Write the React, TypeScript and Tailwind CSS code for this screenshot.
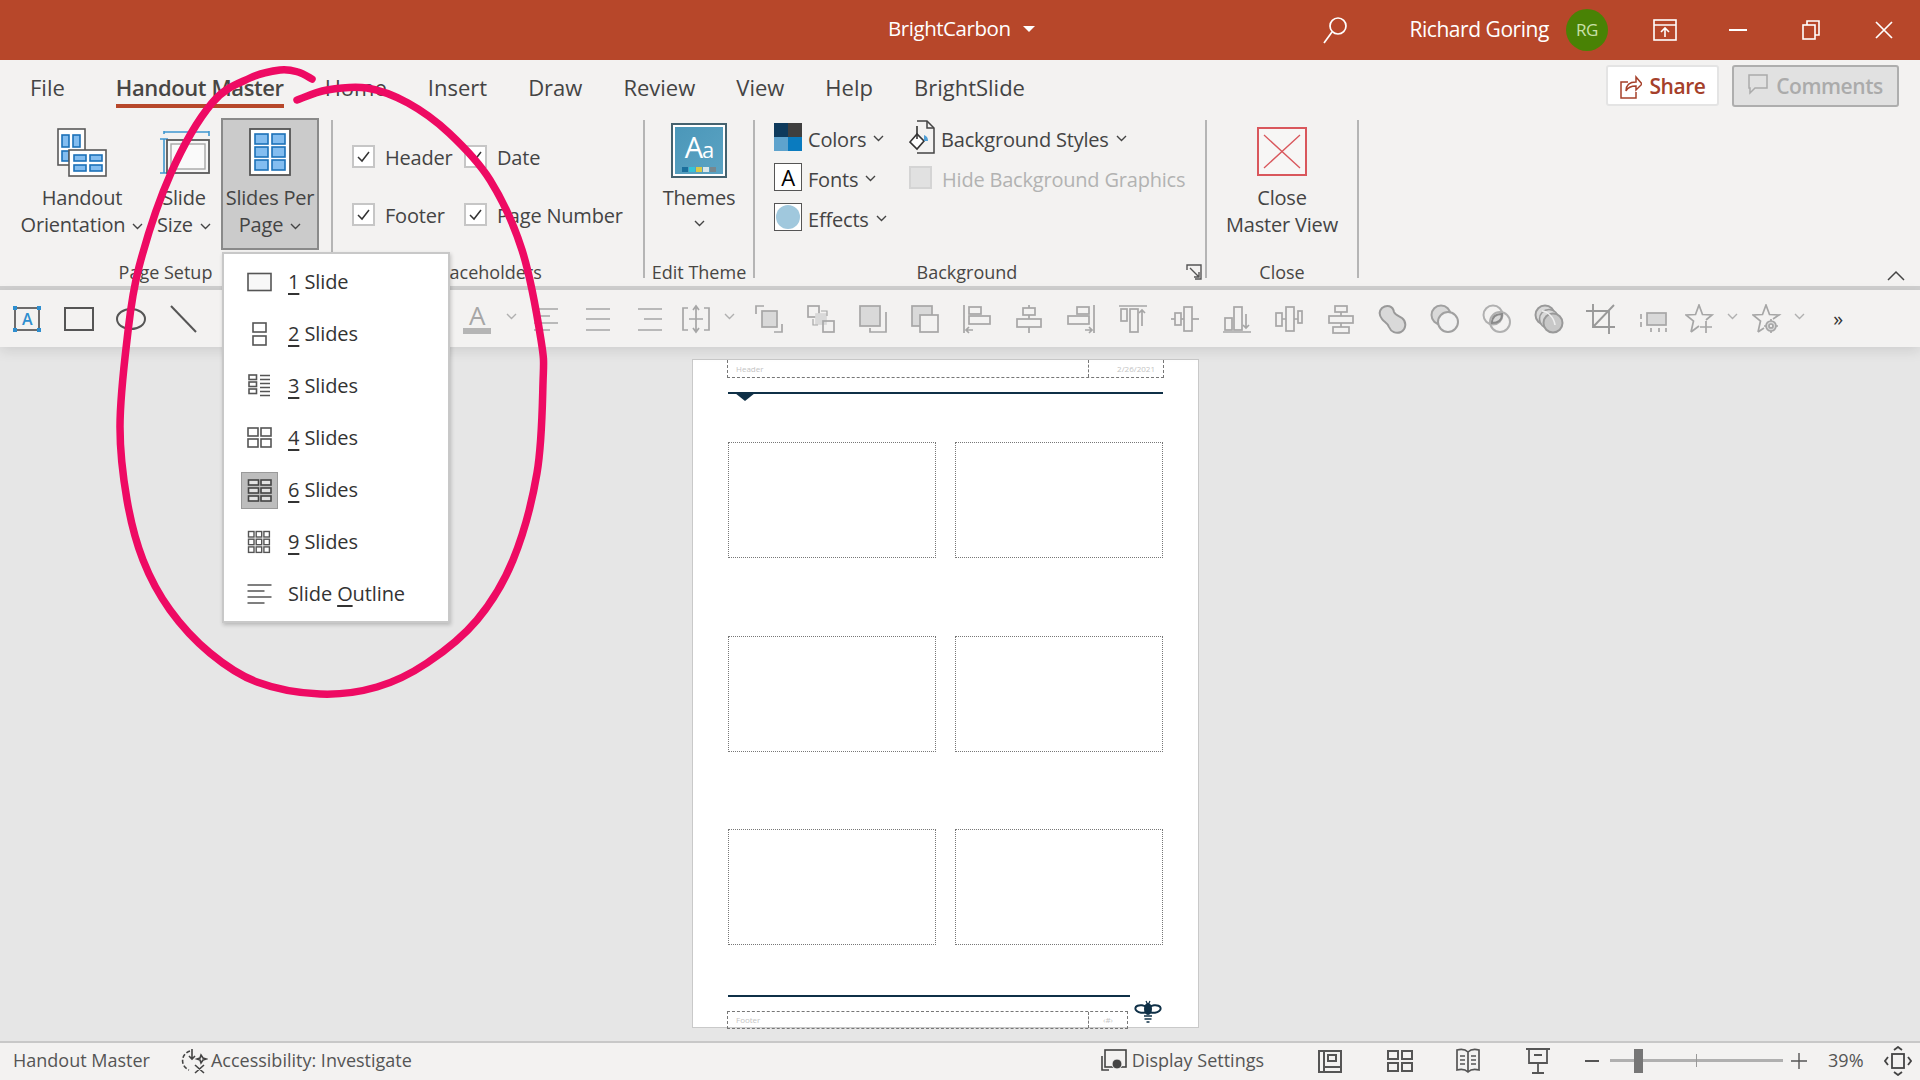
import type { ReactNode } from "react";

const G = "#a6a6a6";
const D = "#595959";

function Chevron({ color = "#444", className = "" }: { color?: string; className?: string }) {
  return (
    <svg width="11" height="7" viewBox="0 0 11 7" className={className}>
      <path d="M1 1l4.5 4.5L10 1" fill="none" stroke={color} strokeWidth="1.4" />
    </svg>
  );
}

function Ic({ children, size = 30 }: { children: ReactNode; size?: number }) {
  return (
    <svg width={size} height={size} viewBox="0 0 30 30" fill="none" stroke={G} strokeWidth="1.7">
      {children}
    </svg>
  );
}

/* ---------- ribbon icons ---------- */

function Cell({ x, y, w, h }: { x: number; y: number; w: number; h: number }) {
  return <rect x={x} y={y} width={w} height={h} fill="#83bdf0" stroke="#1c71b8" strokeWidth="1.6" />;
}

function HandoutIcon() {
  return (
    <svg width="50" height="49" viewBox="0 0 50 49">
      <rect x="1" y="1" width="27" height="36" fill="#fff" stroke={D} strokeWidth="1.6" />
      <Cell x={5} y={7} w={7} h={12} />
      <Cell x={16} y={7} w={7} h={12} />
      <Cell x={5} y={23} w={7} h={10} />
      <rect x="12" y="22" width="37" height="26" fill="#fff" stroke={D} strokeWidth="1.6" />
      <Cell x={17} y={27} w={12} h={6} />
      <Cell x={33} y={27} w={12} h={6} />
      <Cell x={17} y={37} w={12} h={6} />
      <Cell x={33} y={37} w={12} h={6} />
    </svg>
  );
}

function SlideSizeIcon() {
  return (
    <svg width="54" height="43" viewBox="0 0 54 43">
      <path d="M7 8v34M3 8h8M3 42h8M7 1h45M7 0v3M52 0v5" stroke="#3f97cf" strokeWidth="1.6" fill="none" />
      <rect x="10" y="9" width="42" height="33" fill="#f7f7f7" stroke={D} strokeWidth="1.8" />
      <rect x="14" y="13" width="34" height="25" fill="#fafafa" stroke="#a6a6a6" strokeWidth="1.4" />
    </svg>
  );
}

function SlidesPerPageIcon() {
  return (
    <svg width="42" height="48" viewBox="0 0 42 48">
      <rect x="1" y="1" width="40" height="46" fill="#fff" stroke="#555" strokeWidth="1.8" />
      {[6, 19, 32].map((y) => (
        <g key={y}>
          <Cell x={6} y={y} w={13} h={10} />
          <Cell x={23} y={y} w={13} h={10} />
        </g>
      ))}
    </svg>
  );
}

function ThemesIcon() {
  return (
    <div className="w-[56px] h-[55px] -mt-[3px] border-2 border-[#44626f] bg-white p-[2px]">
      <div className="h-full bg-gradient-to-br from-[#4b97b9] to-[#5ba3c3] flex flex-col items-center">
        <div className="text-white text-[29px] leading-[36px] mt-[2px] tracking-[-1px]">
          A<span className="text-[22px]">a</span>
        </div>
        <div className="flex gap-[1px]">
          <div className="w-[6px] h-[5px] bg-[#1b6f9c]" />
          <div className="w-[6px] h-[5px] bg-[#35c3d6]" />
          <div className="w-[6px] h-[5px] bg-[#d8c94a]" />
          <div className="w-[6px] h-[5px] bg-[#dbe6ea]" />
          <div className="w-[6px] h-[5px] bg-[#77878e]" />
        </div>
      </div>
    </div>
  );
}

function ColorsIcon() {
  return (
    <div className="w-[28px] h-[28px] grid grid-cols-2">
      <div className="bg-[#0e3a5c]" />
      <div className="bg-[#3f3f3f]" />
      <div className="bg-[#5ea3cd]" />
      <div className="bg-[#0a7bbf]" />
    </div>
  );
}

function BgStylesIcon() {
  return (
    <svg width="26" height="34" viewBox="0 0 26 34" fill="none">
      <path d="M8 1h10l7 7v25H8" stroke="#444" strokeWidth="1.5" />
      <path d="M18 1v7h7" stroke="#444" strokeWidth="1.5" />
      <path d="M8 14L1 22l7 7 7-8z" fill="#fff" stroke="#333" strokeWidth="1.6" />
      <path d="M8 6v13" stroke="#333" strokeWidth="1.6" />
      <path d="M15 15c3 1 4 3 4 6l-4 0z" fill="#4f9fd6" />
    </svg>
  );
}

function CloseIcon() {
  return (
    <svg width="50" height="49" viewBox="0 0 50 49" className="-mt-[2px]">
      <rect x="1" y="1" width="48" height="47" fill="#f7f6f5" stroke="#d9575c" strokeWidth="2" />
      <path d="M7 8l36 33M43 8L7 41" stroke="#d9575c" strokeWidth="1.3" fill="none" />
    </svg>
  );
}

/* ---------- toolbar icons ---------- */

const lightFill = "#d9d9d9";

const toolbarIcons: Record<string, ReactNode> = {
  textbox: (
    <Ic>
      <rect x="3" y="4" width="24" height="22" stroke="#555" />
      {[[3, 4], [27, 4], [3, 26], [27, 26]].map(([x, y]) => (
        <rect key={x * 100 + y} x={x - 2} y={y - 2} width="4" height="4" fill="#2e8ecf" stroke="none" />
      ))}
      <text x="15" y="21" textAnchor="middle" fontSize="16" fontWeight="600" fill="#2e8ecf" stroke="none">A</text>
    </Ic>
  ),
  rect: (
    <Ic size={30}>
      <rect x="1" y="4" width="28" height="22" stroke="#555" strokeWidth="2" />
    </Ic>
  ),
  ellipse: (
    <Ic>
      <ellipse cx="15" cy="15" rx="14" ry="10" stroke="#555" strokeWidth="2" />
    </Ic>
  ),
  line: (
    <Ic>
      <path d="M3 2l25 26" stroke="#555" strokeWidth="2" />
    </Ic>
  ),
  fontcolor: (
    <Ic>
      <text x="15" y="21" textAnchor="middle" fontSize="26" fill="#a6a6a6" stroke="none">A</text>
      <rect x="1" y="24" width="28" height="6" fill="#b5b5b5" stroke="none" />
    </Ic>
  ),
  left: (
    <Ic><path d="M3 5h24M3 12h16M3 19h24M3 26h16" /></Ic>
  ),
  center: (
    <Ic><path d="M3 5h24M3 15h24M3 26h24M7 10h0" /></Ic>
  ),
  right: (
    <Ic><path d="M3 5h24M9 15h18M3 26h24" /></Ic>
  ),
  spacing: (
    <Ic>
      <path d="M7 4H2v22h5M23 4h5v22h-5M15 2v26M12 6l3-4 3 4M12 24l3 4 3-4M8 15h14" />
    </Ic>
  ),
  forward: (
    <Ic>
      <path d="M2 10V2h8M28 20v8h-8" />
      <rect x="8" y="7" width="15" height="16" fill={lightFill} />
    </Ic>
  ),
  group: (
    <Ic>
      <rect x="2" y="2" width="11" height="11" />
      <rect x="10" y="10" width="10" height="10" fill={lightFill} stroke={lightFill} />
      <path d="M15 7h6v5M7 15v6h5" strokeWidth="1.2" />
      <rect x="17" y="17" width="11" height="11" />
    </Ic>
  ),
  front: (
    <Ic>
      <rect x="2" y="2" width="20" height="20" fill={lightFill} />
      <path d="M28 8v20H12v-4" />
    </Ic>
  ),
  back: (
    <Ic>
      <rect x="2" y="2" width="20" height="20" fill={lightFill} />
      <rect x="10" y="11" width="18" height="17" fill="#f3f2f1" />
    </Ic>
  ),
  alignL: (
    <Ic>
      <path d="M2 1v28M11 26H4M7 23l-3 3 3 3" />
      <rect x="7" y="3" width="12" height="7" />
      <rect x="7" y="12" width="21" height="8" fill="#f3f2f1" />
    </Ic>
  ),
  alignC: (
    <Ic>
      <path d="M15 1v28" />
      <rect x="9" y="4" width="12" height="7" fill="#f3f2f1" />
      <rect x="3" y="15" width="24" height="8" fill="#f3f2f1" />
    </Ic>
  ),
  alignR: (
    <Ic>
      <path d="M28 1v28M19 26h7M23 23l3 3-3 3" />
      <rect x="11" y="3" width="12" height="7" />
      <rect x="2" y="12" width="21" height="8" fill="#f3f2f1" />
    </Ic>
  ),
  alignT: (
    <Ic>
      <path d="M1 2h28M24 22V6M21 9l3-3 3 3" />
      <rect x="3" y="5" width="6" height="12" />
      <rect x="12" y="5" width="8" height="23" fill="#f3f2f1" />
    </Ic>
  ),
  alignM: (
    <Ic>
      <path d="M1 15h28" />
      <rect x="5" y="9" width="6" height="12" fill="#f3f2f1" />
      <rect x="14" y="3" width="8" height="24" fill="#f3f2f1" />
    </Ic>
  ),
  alignB: (
    <Ic>
      <path d="M1 28h28M24 10v14M21 21l3 3 3-3" />
      <rect x="3" y="14" width="7" height="12" />
      <rect x="12" y="3" width="8" height="23" />
    </Ic>
  ),
  distH: (
    <Ic>
      <rect x="2" y="9" width="6" height="13" />
      <rect x="12" y="3" width="8" height="24" />
      <rect x="24" y="7" width="4" height="12" />
      <path d="M8 15h4M20 15h4" />
    </Ic>
  ),
  distV: (
    <Ic>
      <rect x="9" y="2" width="12" height="6" />
      <rect x="3" y="12" width="24" height="7" />
      <rect x="7" y="23" width="16" height="6" />
      <path d="M15 8v4M15 19v4" />
    </Ic>
  ),
  union: (
    <Ic>
      <path d="M4 4c5-4 11-2 12 4 1 3 5 4 8 6 5 4 4 11-1 14-5 2-10 0-12-5-1-4-5-5-7-8-3-4-3-8 0-11z" fill={lightFill} stroke="#999" strokeWidth="2" />
    </Ic>
  ),
  combine: (
    <Ic>
      <circle cx="11" cy="11" r="9.5" fill={lightFill} stroke="#a0a0a0" strokeWidth="2" />
      <circle cx="18" cy="18" r="10" fill="#f1f1f1" stroke="#a0a0a0" strokeWidth="2" />
    </Ic>
  ),
  fragment: (
    <Ic>
      <circle cx="11" cy="11" r="9.5" stroke="#b0b0b0" strokeWidth="2" />
      <circle cx="18" cy="18" r="10" stroke="#b0b0b0" strokeWidth="2" />
      <path d="M10 19c0-6 4-9 10-9 0 6-4 9-10 9z" fill={lightFill} stroke="#8a8a8a" strokeWidth="2" />
    </Ic>
  ),
  intersect: (
    <Ic>
      <circle cx="11" cy="11" r="9.5" fill={lightFill} stroke="#999" strokeWidth="2" />
      <circle cx="15" cy="15" r="9.5" fill={lightFill} stroke="#999" strokeWidth="1.6" />
      <circle cx="19" cy="19" r="9.5" fill="#c8c8c8" stroke="#999" strokeWidth="2" />
      <path d="M8 7c5 0 12 6 13 14" stroke="#eee" strokeWidth="1.6" />
    </Ic>
  ),
  crop: (
    <Ic>
      <path d="M7 0v23h22M0 7h23v23M28 1L7 23" stroke="#999" strokeWidth="1.9" />
    </Ic>
  ),
  selection: (
    <Ic>
      <path d="M3 10v16" strokeDasharray="5 3" />
      <rect x="9" y="9" width="19" height="12" fill={lightFill} />
      <path d="M13 24v4M21 24v4M28 24v4" />
    </Ic>
  ),
  starPlus: (
    <Ic>
      <path d="M6 28l2.5-11L1 11l9.5-.5L14 1l3.5 9.5L27 11l-6 5M6 28l8-6" />
      <path d="M21 17v12M15 23h12" />
    </Ic>
  ),
  starGear: (
    <Ic>
      <path d="M6 28l2.5-11L1 11l9.5-.5L14 1l3.5 9.5L27 11l-6 4M6 28l6-4" />
      <circle cx="19" cy="22" r="5" fill={lightFill} />
      <circle cx="19" cy="22" r="2" fill="#f3f2f1" />
      <path d="M19 15v2M19 27v2M12 22h2M24 22h2" />
    </Ic>
  ),
};

type Slot = { key?: string; w: string; chevron?: boolean; node?: ReactNode };

const toolbar: Slot[] = [
  { key: "textbox", w: "w-[52px]" },
  { key: "rect", w: "w-[52px]" },
  { key: "ellipse", w: "w-[52px]" },
  { key: "line", w: "w-[52px]" },
  { w: "w-[242px]" },
  { key: "fontcolor", w: "w-[52px]" },
  { w: "w-[17px]", chevron: true },
  { key: "left", w: "w-[52px]" },
  { key: "center", w: "w-[52px]" },
  { key: "right", w: "w-[52px]" },
  { key: "spacing", w: "w-[40px]" },
  { w: "w-[27px]", chevron: true },
  { key: "forward", w: "w-[52px]" },
  { key: "group", w: "w-[52px]" },
  { key: "front", w: "w-[52px]" },
  { key: "back", w: "w-[52px]" },
  { key: "alignL", w: "w-[52px]" },
  { key: "alignC", w: "w-[52px]" },
  { key: "alignR", w: "w-[52px]" },
  { key: "alignT", w: "w-[52px]" },
  { key: "alignM", w: "w-[52px]" },
  { key: "alignB", w: "w-[52px]" },
  { key: "distH", w: "w-[52px]" },
  { key: "distV", w: "w-[52px]" },
  { key: "union", w: "w-[52px]" },
  { key: "combine", w: "w-[52px]" },
  { key: "fragment", w: "w-[52px]" },
  { key: "intersect", w: "w-[52px]" },
  { key: "crop", w: "w-[52px]" },
  { key: "selection", w: "w-[52px]" },
  { key: "starPlus", w: "w-[42px]" },
  { w: "w-[22px]", chevron: true },
  { key: "starGear", w: "w-[48px]" },
  { w: "w-[16px]", chevron: true },
  { w: "w-[62px]", node: <span className="text-[#333] text-[20px] leading-none">»</span> },
];

/* ---------- menu icons ---------- */

function MenuSvg({ children }: { children: ReactNode }) {
  return (
    <svg width="35" height="35" viewBox="0 0 35 35" fill="none" stroke="#555" strokeWidth="1.6">
      {children}
    </svg>
  );
}

function gridRects(cols: number, rows: number, x0: number, y0: number, w: number, h: number, gap: number) {
  const out: ReactNode[] = [];
  for (let r = 0; r < rows; r++) {
    for (let c = 0; c < cols; c++) {
      out.push(<rect key={`${r}-${c}`} x={x0 + c * (w + gap)} y={y0 + r * (h + gap)} width={w} height={h} fill="#fff" />);
    }
  }
  return out;
}

const menuItems: { label: ReactNode; icon: ReactNode; active?: boolean }[] = [
  {
    label: <><u className="underline-offset-[4px]">1</u> Slide</>,
    icon: <MenuSvg><rect x="6" y="8.5" width="23" height="17" fill="#f8f8f8" /></MenuSvg>,
  },
  {
    label: <><u className="underline-offset-[4px]">2</u> Slides</>,
    icon: <MenuSvg><rect x="11" y="6" width="13" height="9" /><rect x="11" y="19" width="13" height="9" /></MenuSvg>,
  },
  {
    label: <><u className="underline-offset-[4px]">3</u> Slides</>,
    icon: (
      <MenuSvg>
        {gridRects(1, 3, 7, 6, 7.5, 4.5, 2.5)}
        <path d="M18 6.5h10M18 10.5h10M18 14.5h10M18 18.5h10M18 22.5h10M18 26.5h10" strokeWidth="1.3" />
      </MenuSvg>
    ),
  },
  {
    label: <><u className="underline-offset-[4px]">4</u> Slides</>,
    icon: <MenuSvg>{gridRects(2, 2, 6, 7, 10, 8, 3)}</MenuSvg>,
  },
  {
    label: <><u className="underline-offset-[4px]">6</u> Slides</>,
    icon: (
      <svg width="35" height="35" viewBox="0 0 35 35" fill="none" stroke="#444" strokeWidth="1.6">
        {[7, 15, 23].map((y) => (
          <g key={y}>
            <rect x="6.5" y={y} width="10" height="5" fill="#e2e2e2" />
            <rect x="19" y={y} width="10" height="5" fill="#e2e2e2" />
          </g>
        ))}
      </svg>
    ),
    active: true,
  },
  {
    label: <><u className="underline-offset-[4px]">9</u> Slides</>,
    icon: (
      <svg width="35" height="35" viewBox="0 0 35 35" fill="none" stroke="#555" strokeWidth="1.4">
        {gridRects(3, 3, 6.5, 6.5, 5.5, 5.5, 2.2)}
      </svg>
    ),
  },
  {
    label: <>Slide <u className="underline-offset-[4px]">O</u>utline</>,
    icon: <MenuSvg><path d="M5.5 8h24M5.5 14h17M5.5 20h24M5.5 26h17" strokeWidth="1.3" /></MenuSvg>,
  },
];

/* ---------- pieces ---------- */

function BigButton({ icon, lines, chevronInline, chevronBelow, className = "" }: {
  icon: ReactNode;
  lines: string[];
  chevronInline?: boolean;
  chevronBelow?: boolean;
  className?: string;
}) {
  return (
    <div className={`flex flex-col items-center ${className}`}>
      <div className="h-[64px] flex items-center justify-center">{icon}</div>
      {lines.map((line, i) => (
        <div key={line} className="leading-[27px] whitespace-nowrap flex items-center">
          {line}
          {chevronInline && i === lines.length - 1 && <Chevron className="ml-[7px] mt-[3px]" />}
        </div>
      ))}
      {chevronBelow && <Chevron className="mt-[9px]" />}
    </div>
  );
}

function Group({ label, width, children, bodyClass = "" }: {
  label: ReactNode;
  width: string;
  children: ReactNode;
  bodyClass?: string;
}) {
  return (
    <div className={`${width} h-[158px] border-r-2 border-[#b5b5b5] shrink-0`}>
      <div className={`h-[142px] ${bodyClass}`}>{children}</div>
      <div className="h-[20px] leading-[20px] text-center text-[18px] tracking-normal text-[#484644]">{label}</div>
    </div>
  );
}

function Check({ label, className = "" }: { label: string; className?: string }) {
  return (
    <div className={`flex items-center ${className}`}>
      <div className="w-[23px] h-[23px] bg-white border-2 border-[#c6c6c6] flex items-center justify-center">
        <svg width="13" height="12" viewBox="0 0 13 12">
          <path d="M1 6l4 4 7-9" fill="none" stroke="#333" strokeWidth="1.5" />
        </svg>
      </div>
      <span className="ml-[10px] mt-[3px] whitespace-nowrap">{label}</span>
    </div>
  );
}

function SmallDrop({ icon, label, className = "" }: { icon: ReactNode; label: string; className?: string }) {
  return (
    <div className={`h-[40px] flex items-center ${className}`}>
      {icon}
      <span className="ml-[6px] mt-[6px]">{label}</span>
      <Chevron className="ml-[7px] mt-[2px]" />
    </div>
  );
}

function Bee() {
  return (
    <svg width="28" height="24" viewBox="0 0 28 24" fill="none">
      <ellipse cx="7.5" cy="9" rx="6.2" ry="3.8" transform="rotate(8 7.5 9)" fill="#fff" stroke="#0f3047" strokeWidth="2" />
      <ellipse cx="20.5" cy="9" rx="6.2" ry="3.8" transform="rotate(-8 20.5 9)" fill="#fff" stroke="#0f3047" strokeWidth="2" />
      <path d="M12 1l1.5 3M16 1l-1.5 3" stroke="#0f3047" strokeWidth="1.2" />
      <ellipse cx="14" cy="9" rx="4" ry="6" fill="#0f3047" />
      <path d="M10 16h8M10.5 19h7M12.5 22h3" stroke="#0f3047" strokeWidth="1.7" />
    </svg>
  );
}

function Thumb() {
  return <div className="border border-dotted border-[#777] h-[116px]" />;
}

// catmull-rom through the hand drawn points
function smooth(pts: number[][]) {
  let d = `M${pts[0][0]} ${pts[0][1]}`;
  for (let i = 0; i < pts.length - 1; i++) {
    const p0 = pts[Math.max(i - 1, 0)];
    const p1 = pts[i];
    const p2 = pts[i + 1];
    const p3 = pts[Math.min(i + 2, pts.length - 1)];
    const c1 = [p1[0] + (p2[0] - p0[0]) / 6, p1[1] + (p2[1] - p0[1]) / 6];
    const c2 = [p2[0] - (p3[0] - p1[0]) / 6, p2[1] - (p3[1] - p1[1]) / 6];
    d += `C${c1[0]} ${c1[1]} ${c2[0]} ${c2[1]} ${p2[0]} ${p2[1]}`;
  }
  return d;
}

const scribble = [
  [312, 79], [298, 72], [280, 70], [250, 78], [212, 103], [171, 173], [139, 267], [127, 340], [120, 427],
  [127, 500], [143, 560], [170, 610], [210, 653], [257, 682], [320, 694], [377, 687], [427, 663], [477, 620],
  [513, 560], [537, 473], [543, 383], [541, 340], [522, 250], [490, 180], [449, 133], [408, 103], [367, 88],
  [327, 90], [297, 100],
];

export default function App() {
  return (
    <div className="relative w-[1920px] h-[1080px] overflow-hidden flex flex-col bg-[#e6e6e6] text-[#444] text-[21px] tracking-[-0.45px] font-['Open_Sans','Noto_Sans',sans-serif]">
      {/* Title bar */}
      <div className="h-[60px] shrink-0 bg-[#b7472a] text-white flex items-center">
        <div className="ml-[888px] -mt-[3px] text-[20.5px] whitespace-nowrap">BrightCarbon</div>
        <div className="ml-[12px] -mt-[3px] w-0 h-0 border-x-[6px] border-x-transparent border-t-[6px] border-t-white" />
        <div className="ml-auto flex items-center">
          <svg width="26" height="28" viewBox="0 0 26 28" fill="none" stroke="#fff" strokeWidth="1.7" className="mr-[61px]">
            <circle cx="16" cy="10" r="8" />
            <path d="M10 16L2 27" />
          </svg>
          <div className="whitespace-nowrap">Richard Goring</div>
          <div className="ml-[17px] mr-[20px] w-[42px] h-[42px] rounded-full bg-[#498205] text-[#c8e0a8] text-[17px] flex items-center justify-center">RG</div>
          <div className="w-[73px] flex justify-center">
            <svg width="24" height="22" viewBox="0 0 24 22" fill="none" stroke="#fff" strokeWidth="1.6">
              <rect x="1" y="1" width="22" height="20" />
              <path d="M1 6h22M12 18V9M8 13l4-4 4 4" />
            </svg>
          </div>
          <div className="w-[73px] flex justify-center">
            <div className="w-[18px] h-[2px] bg-white" />
          </div>
          <div className="w-[73px] flex justify-center">
            <svg width="18" height="20" viewBox="0 0 18 20" fill="none" stroke="#fff" strokeWidth="1.6">
              <rect x="1" y="5" width="12" height="14" />
              <path d="M5 5V1h12v14h-4" />
            </svg>
          </div>
          <div className="w-[73px] flex justify-center">
            <svg width="18" height="18" viewBox="0 0 18 18" stroke="#fff" strokeWidth="1.7">
              <path d="M1 1l16 16M17 1L1 17" />
            </svg>
          </div>
        </div>
      </div>

      {/* Tabs */}
      <div className="h-[60px] shrink-0 bg-[#f3f2f1] flex items-start pl-[30px] pr-[21px]">
        <div className="mt-[13px] flex gap-[41px] leading-[28px] text-[22px] tracking-normal">
          <span className="mr-[10px]">File</span>
          <span className="relative font-semibold text-[#484644] tracking-[-0.4px]">
            Handout Master
            <span className="absolute left-0 right-0 top-[31px] h-[4px] bg-[#b7472a]" />
          </span>
          <span>Home</span>
          <span>Insert</span>
          <span>Draw</span>
          <span>Review</span>
          <span>View</span>
          <span>Help</span>
          <span>BrightSlide</span>
        </div>
        <div className="ml-auto mt-[5px] flex gap-[13px]">
          <div className="w-[113px] h-[41px] bg-white border-2 border-[#e4e4e4] rounded-[3px] flex items-center justify-center pt-[2px] font-semibold text-[#a5402a]">
            <svg width="22" height="24" viewBox="0 0 22 24" fill="none" stroke="#a5402a" strokeWidth="1.5" className="mr-[8px]">
              <path d="M8 7H1v16h15v-6" />
              <path d="M6 16c0-6 4-9 10-9V2l6 7-6 6V11c-4 0-8 1-10 5z" />
            </svg>
            Share
          </div>
          <div className="w-[167px] h-[42px] bg-[#e1e1e1] border-2 border-[#aeaeae] rounded-[3px] flex items-center justify-center pt-[2px] font-semibold text-[#ababab]">
            <svg width="20" height="22" viewBox="0 0 20 22" fill="none" stroke="#ababab" strokeWidth="1.5" className="mr-[8px] -mt-[5px]">
              <path d="M1 1h18v13H7l-5 5v-5H1z" />
            </svg>
            Comments
          </div>
        </div>
      </div>

      {/* Ribbon */}
      <div className="relative h-[170px] shrink-0 bg-[#f3f2f1] border-b-[4px] border-[#cfcfcf] flex text-[20px] tracking-[-0.2px]">
        <Group label="Page Setup" width="w-[333px]" bodyClass="flex pl-[13px]">
          <BigButton icon={<HandoutIcon />} lines={["Handout", "Orientation"]} chevronInline className="w-[138px]" />
          <BigButton icon={<SlideSizeIcon />} lines={["Slide", "Size"]} chevronInline className="w-[66px]" />
          <BigButton
            icon={<SlidesPerPageIcon />}
            lines={["Slides Per", "Page"]}
            chevronInline
            className="w-[98px] h-[132px] ml-[4px] -mt-[2px] bg-[#cbcbcb] border-2 border-[#8a8a8a]"
          />
        </Group>
        <Group label="Placeholders" width="w-[312px]" bodyClass="pl-[19px] pt-[20px]">
          <div className="flex h-[58px] items-start">
            <Check label="Header" className="w-[112px]" />
            <Check label="Date" />
          </div>
          <div className="flex items-start">
            <Check label="Footer" className="w-[112px]" />
            <Check label="Page Number" />
          </div>
        </Group>
        <Group label="Edit Theme" width="w-[110px]">
          <BigButton icon={<ThemesIcon />} lines={["Themes"]} chevronBelow />
        </Group>
        <Group
          label={
            <span className="relative block pr-[26px]">
              Background
              <svg width="16" height="16" viewBox="0 0 16 16" fill="none" stroke="#555" strokeWidth="1.4" className="absolute right-[3px] top-[2px]">
                <path d="M1 6V1h14v14H9M4 4l9 9M8 13h5V8" />
              </svg>
            </span>
          }
          width="w-[452px]"
          bodyClass="flex pl-[19px]"
        >
          <div className="w-[135px] -mt-[3px]">
            <SmallDrop icon={<ColorsIcon />} label="Colors" />
            <SmallDrop
              icon={<div className="w-[28px] h-[28px] bg-white border border-[#555] text-black text-[22px] leading-[26px] text-center">A</div>}
              label="Fonts"
            />
            <SmallDrop
              icon={
                <div className="w-[28px] h-[28px] bg-white border border-[#555] p-[1px]">
                  <div className="w-full h-full rounded-full bg-[#a0c8dd]" />
                </div>
              }
              label="Effects"
            />
          </div>
          <div className="-mt-[3px]">
            <SmallDrop icon={<BgStylesIcon />} label="Background Styles" />
            <div className="h-[40px] flex items-center text-[#b2b2b2]">
              <div className="w-[23px] h-[23px] bg-[#e1e1e1] border-2 border-[#d4d4d4]" />
              <span className="ml-[10px] mt-[6px] whitespace-nowrap">Hide Background Graphics</span>
            </div>
          </div>
        </Group>
        <Group label="Close" width="w-[152px]">
          <BigButton icon={<CloseIcon />} lines={["Close", "Master View"]} />
        </Group>
        <svg width="20" height="12" viewBox="0 0 20 12" fill="none" stroke="#444" strokeWidth="1.5" className="absolute left-[1886px] top-[150px]">
          <path d="M2 10l8-8 8 8" />
        </svg>
      </div>

      {/* Shapes toolbar */}
      <div className="relative z-10 h-[57px] shrink-0 bg-[#f3f2f1] flex items-center pl-[1px] shadow-[0_4px_12px_rgba(0,0,0,0.1)]">
        {toolbar.map((slot, i) => (
          <div key={i} className={`${slot.w} shrink-0 flex justify-center`}>
            {slot.key && toolbarIcons[slot.key]}
            {slot.chevron && <Chevron color="#b0b0b0" className="-mt-[4px]" />}
            {slot.node}
          </div>
        ))}
      </div>

      {/* Canvas */}
      <div className="flex-1 pl-[692px] pt-[12px] overflow-hidden">
        <div className="w-[507px] h-[669px] bg-white border border-[#c9c9c9] flex flex-col pl-[34px] text-[8px] text-[#c4c4c4] tracking-normal">
          <div className="flex shrink-0 h-[18px] w-[437px] border border-t-0 border-dashed border-[#777]">
            <div className="w-[361px] pl-[8px] leading-[17px] border-r border-dashed border-[#777]">Header</div>
            <div className="flex-1 pr-[8px] leading-[17px] text-right">2/26/2021</div>
          </div>
          <div className="relative shrink-0 mt-[14px] w-[435px] ml-[1px] h-[1.5px] bg-[#0f3047]">
            <div className="absolute left-[7px] top-[1px] w-0 h-0 border-x-[10px] border-x-transparent border-t-[8px] border-t-[#0f3047]" />
          </div>
          <div className="shrink-0 mt-[48.5px] ml-[1px] w-[435px] grid grid-cols-2 gap-x-[19px] gap-y-[77.5px]">
            <Thumb />
            <Thumb />
            <Thumb />
            <Thumb />
            <Thumb />
            <Thumb />
          </div>
          <div className="shrink-0 mt-[50px] ml-[1px] w-[402px] h-[1.5px] bg-[#0f3047]" />
          <div className="flex shrink-0 mt-[14.5px]">
            <div className="flex h-[18px] w-[401px] border border-dashed border-[#777]">
              <div className="w-[361px] pl-[8px] leading-[16px] border-r border-dashed border-[#777]">Footer</div>
              <div className="flex-1 leading-[16px] text-center">‹#›</div>
            </div>
            <div className="ml-[6px] -mt-[11px]"><Bee /></div>
          </div>
        </div>
      </div>

      {/* Status bar */}
      <div className="h-[39px] shrink-0 bg-[#f3f2f1] border-t-2 border-[#c8c8c8] flex items-center pb-[2px] text-[18px] tracking-normal text-[#555]">
        <span className="ml-[13px]">Handout Master</span>
        <svg width="28" height="26" viewBox="0 0 28 26" fill="none" stroke="#444" strokeWidth="1.6" className="ml-[30px]">
          <path d="M10 3a10 10 0 0 0-1 19" strokeDasharray="4 2" />
          <path d="M12 1v10M9 8l3 3 3-3" />
          <path d="M15 17l9 8M24 17l-9 8M21 7l2 3 3 1-3 1-2 3-1-3-3-1 3-1z" />
        </svg>
        <span className="ml-[3px]">Accessibility: Investigate</span>

        <svg width="26" height="24" viewBox="0 0 26 24" fill="none" stroke="#444" strokeWidth="1.6" className="ml-[689px]">
          <path d="M8 21H1V7" />
          <rect x="4" y="1" width="21" height="17" />
          <circle cx="16" cy="15" r="5" fill="#444" stroke="#f3f2f1" strokeWidth="1" />
        </svg>
        <span className="ml-[5px]">Display Settings</span>

        <div className="ml-[53px] flex items-center">
          <svg width="26" height="26" viewBox="0 0 26 26" fill="none" stroke="#555" strokeWidth="2">
            <rect x="2" y="3" width="22" height="21" />
            <path d="M7 3v21M7 19h17" />
            <rect x="11" y="7" width="8" height="6" />
          </svg>
          <svg width="26" height="26" viewBox="0 0 26 26" fill="none" stroke="#555" strokeWidth="2" className="ml-[44px]">
            <rect x="1" y="3" width="10" height="8" />
            <rect x="15" y="3" width="10" height="8" />
            <rect x="1" y="15" width="10" height="8" />
            <rect x="15" y="15" width="10" height="8" />
          </svg>
          <svg width="24" height="28" viewBox="0 0 24 28" fill="none" stroke="#555" strokeWidth="1.7" className="ml-[43px]">
            <path d="M12 5C9 2 5 2 1 3v20c4-1 8-1 11 2 3-3 7-3 11-2V3c-4-1-8-1-11 2zM12 5v20M4 9h5M4 13h5M4 17h5M15 9h5M15 13h5M15 17h5" />
          </svg>
          <svg width="24" height="28" viewBox="0 0 24 28" fill="none" stroke="#555" strokeWidth="1.8" className="ml-[46px]">
            <path d="M0 2h24M3 2v14h18V2M12 16v9M6 26h12M8 8h8" />
          </svg>
        </div>
        <div className="ml-[35px] w-[14px] h-[2px] bg-[#555]" />
        <div className="relative ml-[11px] w-[173px] h-[3px] bg-[#b0b0b0]">
          <div className="absolute left-[24px] -top-[10px] w-[9px] h-[24px] bg-[#767676]" />
          <div className="absolute left-[86px] -top-[5px] w-[1px] h-[13px] bg-[#999]" />
        </div>
        <svg width="16" height="16" viewBox="0 0 16 16" stroke="#555" strokeWidth="1.4" className="ml-[8px]">
          <path d="M0 8h16M8 0v16" />
        </svg>
        <span className="ml-[21px]">39%</span>
        <svg width="28" height="30" viewBox="0 0 28 30" fill="none" stroke="#444" strokeWidth="1.8" className="ml-[20px]">
          <rect x="8" y="8" width="12" height="14" />
          <path d="M10 4l4-3 4 3M10 26l4 3 4-3M4 11l-3 4 3 4M24 11l3 4-3 4" />
        </svg>
      </div>

      {/* Slides Per Page dropdown */}
      <div className="absolute z-20 left-[222px] top-[252px] w-[228px] h-[371px] bg-white border-2 border-[#c8c8c8] shadow-[1px_2px_4px_rgba(0,0,0,0.2)] pt-[2px] text-[#333] text-[20px] tracking-[-0.1px]">
        {menuItems.map((item, i) => (
          <div key={i} className="h-[52px] flex items-center pl-[18px]">
            <div className={`w-[35px] h-[35px] ${item.active ? "bg-[#bdbdbd] outline outline-1 outline-[#9a9a9a]" : ""}`}>{item.icon}</div>
            <span className="ml-[11px] whitespace-nowrap">{item.label}</span>
          </div>
        ))}
      </div>

      {/* Pink hand drawn circle */}
      <svg className="absolute z-30 left-0 top-0 pointer-events-none" width="1920" height="1080" viewBox="0 0 1920 1080" fill="none">
        <path d={smooth(scribble)} stroke="#ee0a63" strokeWidth="7.5" strokeLinecap="round" strokeLinejoin="round" />
      </svg>
    </div>
  );
}
